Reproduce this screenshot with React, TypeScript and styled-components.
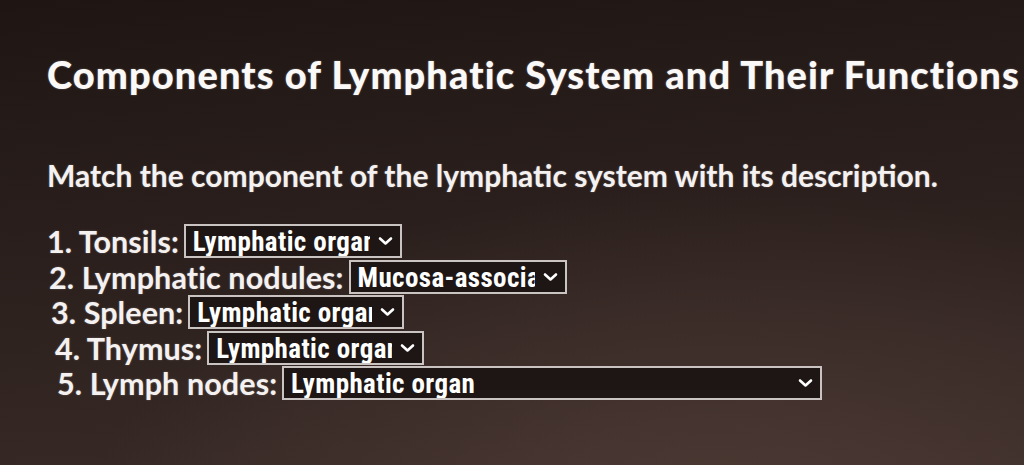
import React from "react";
import styled, { createGlobalStyle } from "styled-components";

const GlobalStyle = createGlobalStyle`
  html, body {
    margin: 0;
    padding: 0;
    width: 1024px;
    height: 465px;
    overflow: hidden;
  }
  body {
    background: #2a201e;
  }
`;

const Page = styled.main`
  width: 1024px;
  height: 465px;
  box-sizing: border-box;
  padding: 52px 0 0 47px;
  background:
    radial-gradient(ellipse 900px 500px at 70% 115%, rgba(80, 60, 55, 0.85), rgba(80, 60, 55, 0) 70%),
    linear-gradient(175deg, #1f1614 0%, #2a1f1c 45%, #3a2c28 100%);
  color: #f4f1f0;
  display: flex;
  flex-direction: column;
`;

const Title = styled.h1`
  margin: 0;
  font-family: "Lato", "Open Sans", sans-serif;
  font-weight: 900;
  font-size: 38px;
  line-height: 44px;
  letter-spacing: 1.1px;
  white-space: nowrap;
  color: #fbf9f8;
  text-shadow: 0 0 2px rgba(255, 255, 255, 0.35);
`;

const Prompt = styled.p`
  margin: 61px 0 0 0;
  font-family: "Lato", "Open Sans", sans-serif;
  font-weight: 700;
  font-size: 30px;
  line-height: 36px;
  letter-spacing: 0;
  white-space: nowrap;
  color: #f4f1f0;
  text-shadow: 0 0 2px rgba(255, 255, 255, 0.3);
`;

const List = styled.ol`
  list-style: none;
  margin: 31px 0 0 0;
  padding: 0;
  display: flex;
  flex-direction: column;
  gap: 1.5px;
`;

const Row = styled.li<{ $shift: number }>`
  display: flex;
  align-items: center;
  gap: 5px;
  height: 34px;
  padding-left: ${(p) => p.$shift}px;
`;

const Label = styled.span`
  font-family: "Lato", "Open Sans", sans-serif;
  font-weight: 700;
  font-size: 30.5px;
  letter-spacing: 0.1px;
  white-space: nowrap;
  color: #f4f1f0;
  text-shadow: 0 0 2px rgba(255, 255, 255, 0.3);
`;

const SelectWrap = styled.span<{ $w: number }>`
  position: relative;
  display: inline-flex;
  width: ${(p) => p.$w}px;
  height: 34px;
`;

const Select = styled.select`
  appearance: none;
  -webkit-appearance: none;
  width: 100%;
  height: 100%;
  box-sizing: border-box;
  margin: 0;
  padding: 2px 30px 0 7px;
  border: 2px solid #c9c4c2;
  border-radius: 0;
  background: #1e1614;
  color: #ffffff;
  font-family: "Liberation Sans Narrow", "Roboto Condensed", "Roboto", sans-serif;
  font-weight: 700;
  font-size: 27px;
  line-height: 28px;
  letter-spacing: 0.4px;
  outline: none;
`;

const Chevron = styled.svg`
  position: absolute;
  right: 9px;
  top: 50%;
  width: 15px;
  height: 10px;
  transform: translateY(-50%);
  pointer-events: none;
`;

const options = [
  "Lymphatic organ",
  "Mucosa-associated lymphoid tissue",
  "Lymphatic tissue",
  "Lymphatic vessel",
];

const items = [
  { label: "1. Tonsils:", value: "Lymphatic organ", width: 218, shift: 0 },
  { label: "2. Lymphatic nodules:", value: "Mucosa-associated lymphoid tissue", width: 218, shift: 2 },
  { label: "3. Spleen:", value: "Lymphatic organ", width: 216, shift: 4 },
  { label: "4. Thymus:", value: "Lymphatic organ", width: 217, shift: 8 },
  { label: "5. Lymph nodes:", value: "Lymphatic organ", width: 540, shift: 10 },
];

export default function App() {
  return (
    <>
      <GlobalStyle />
      <Page>
        <Title>Components of Lymphatic System and Their Functions</Title>
        <Prompt>Match the component of the lymphatic system with its description.</Prompt>
        <List>
          {items.map((it) => (
            <Row key={it.label} $shift={it.shift}>
              <Label>{it.label}</Label>
              <SelectWrap $w={it.width}>
                <Select defaultValue={it.value}>
                  {options.map((o) => (
                    <option key={o} value={o}>
                      {o}
                    </option>
                  ))}
                </Select>
                <Chevron viewBox="0 0 15 10">
                  <path d="M2 2.5 L7.5 7.5 L13 2.5" fill="none" stroke="#ffffff" strokeWidth="2.6" strokeLinecap="round" strokeLinejoin="round" />
                </Chevron>
              </SelectWrap>
            </Row>
          ))}
        </List>
      </Page>
    </>
  );
}
